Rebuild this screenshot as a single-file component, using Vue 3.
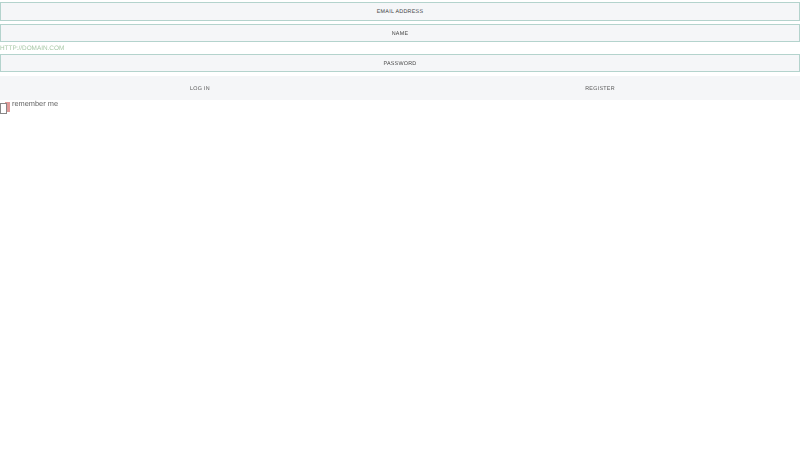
<template>
  <form class="login-form" @submit.prevent>
    <input class="field field--first" type="email" placeholder="EMAIL ADDRESS" />
    <input class="field" type="text" placeholder="NAME" />
    <a class="url-link" href="#">HTTP://DOMAIN.COM</a>
    <input class="field" type="password" placeholder="PASSWORD" />

    <div class="tabs">
      <button class="tab" type="button">LOG IN</button>
      <button class="tab" type="button">REGISTER</button>
    </div>

    <label class="remember">
      <span class="check">
        <span class="check-flag"></span>
        <span class="check-box"></span>
      </span>
      <span class="remember-text">remember me</span>
    </label>
  </form>
</template>

<script setup>
</script>

<style>
body {
  background: #fff;
}
</style>

<style scoped>
.login-form {
  display: flex;
  flex-direction: column;
  padding-top: 2px;
  font-family: "Liberation Sans", Arial, sans-serif;
  text-rendering: geometricPrecision;
  filter: blur(0.3px);
}

.field {
  box-sizing: border-box;
  display: block;
  width: 100%;
  height: 18px;
  margin: 0 0 3px;
  padding: 2px 0 0;
  border: 1px solid #b4d3cd;
  border-radius: 0;
  background: #f5f6f8;
  outline: none;
  font-family: inherit;
  font-size: 5.4px;
  letter-spacing: 0.25px;
  text-align: center;
  text-rendering: geometricPrecision;
}

.field--first {
  height: 19px;
  padding-top: 0;
}

.field::placeholder {
  color: #444;
  opacity: 1;
}

.url-link {
  height: 12px;
  margin-top: -3px;
  font-size: 6.4px;
  line-height: 14px;
  color: #a8c8a7;
  text-decoration: none;
}

.tabs {
  display: grid;
  grid-template-columns: 1fr 1fr;
  height: 24px;
  margin-top: 1px;
  background: #f5f6f8;
}

.tab {
  padding: 2px 0 0;
  border: none;
  background: transparent;
  font-family: inherit;
  font-size: 5.4px;
  letter-spacing: 0.25px;
  color: #555;
  text-rendering: geometricPrecision;
}

.remember {
  display: flex;
  align-items: flex-start;
  gap: 2px;
  font-size: 7.4px;
  line-height: 10px;
  color: #666;
}

.remember-text {
  margin-top: -1px;
}

.check {
  position: relative;
  flex: none;
  width: 10px;
  height: 14px;
}

.check-flag {
  position: absolute;
  left: 5px;
  top: 2px;
  width: 5px;
  height: 10px;
  background: #e09a98;
}

.check-box {
  box-sizing: border-box;
  position: absolute;
  left: 0;
  top: 2.5px;
  width: 6.5px;
  height: 11px;
  border: 1px solid #888;
  background: #fff;
}
</style>
